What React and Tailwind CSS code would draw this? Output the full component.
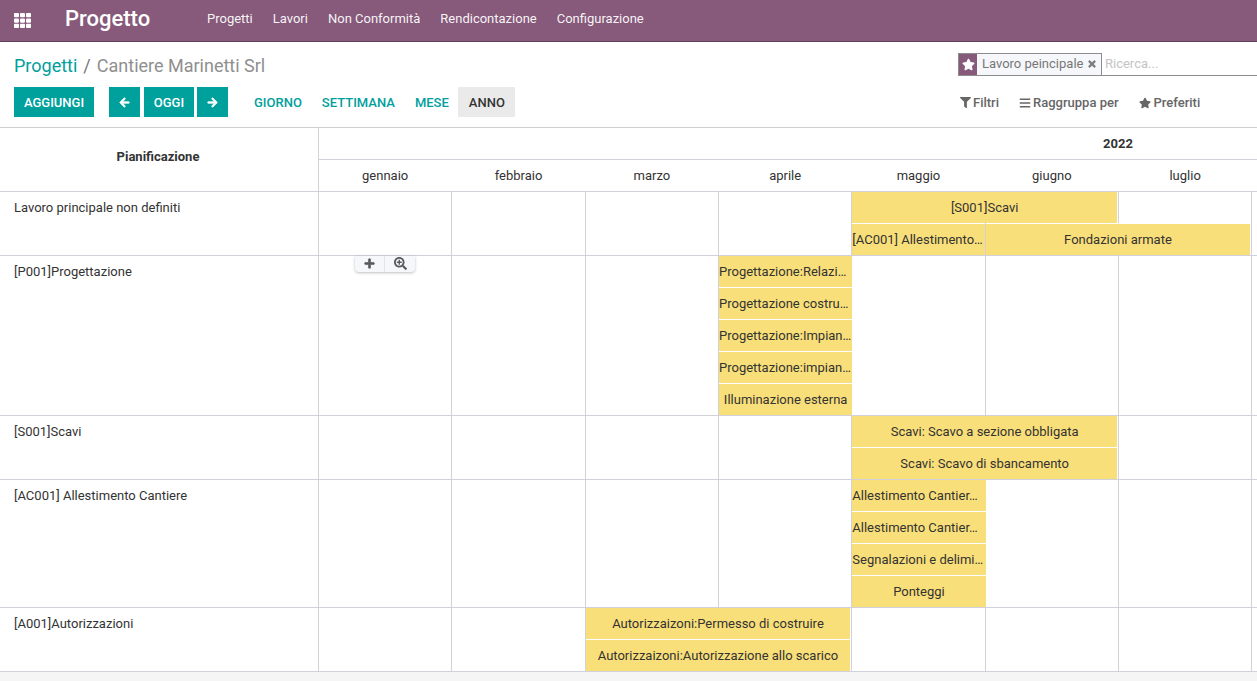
import React from "react";
import { FaTh, FaArrowLeft, FaArrowRight, FaFilter, FaBars, FaStar, FaTimes, FaPlus, FaSearchPlus } from "react-icons/fa";

const MENU = ["Progetti", "Lavori", "Non Conformità", "Rendicontazione", "Configurazione"];
const MONTHS = ["gennaio", "febbraio", "marzo", "aprile", "maggio", "giugno", "luglio"];
const MONTH_COLS = ["col-start-2", "col-start-3", "col-start-4", "col-start-5", "col-start-6", "col-start-7", "col-start-8"];

const ROWS = [
  {
    label: "Lavoro principale non definiti",
    rowsCls: "grid-rows-[31px_32px]",
    bars: [
      { text: "[S001]Scavi", cls: "col-start-6 col-span-2 row-start-1 mr-[2px] text-center" },
      { text: "[AC001] Allestimento…", cls: "col-start-6 col-span-1 row-start-2 border-t border-white mr-[1px] text-left" },
      { text: "Fondazioni armate", cls: "col-start-7 col-span-2 row-start-2 border-t border-white mr-[2px] text-center" },
    ],
  },
  {
    label: "[P001]Progettazione",
    rowsCls: "grid-rows-[31px_32px_32px_32px_32px]",
    bars: [
      { text: "Progettazione:Relazi…", cls: "col-start-5 col-span-1 row-start-1 text-left" },
      { text: "Progettazione costru…", cls: "col-start-5 col-span-1 row-start-2 border-t border-white text-left" },
      { text: "Progettazione:Impian…", cls: "col-start-5 col-span-1 row-start-3 border-t border-white text-left" },
      { text: "Progettazione:impian…", cls: "col-start-5 col-span-1 row-start-4 border-t border-white text-left" },
      { text: "Illuminazione esterna", cls: "col-start-5 col-span-1 row-start-5 border-t border-white text-center" },
    ],
  },
  {
    label: "[S001]Scavi",
    rowsCls: "grid-rows-[31px_32px]",
    bars: [
      { text: "Scavi: Scavo a sezione obbligata", cls: "col-start-6 col-span-2 row-start-1 mr-[2px] text-center" },
      { text: "Scavi: Scavo di sbancamento", cls: "col-start-6 col-span-2 row-start-2 border-t border-white mr-[2px] text-center" },
    ],
  },
  {
    label: "[AC001] Allestimento Cantiere",
    rowsCls: "grid-rows-[31px_32px_32px_32px]",
    bars: [
      { text: "Allestimento Cantier…", cls: "col-start-6 col-span-1 row-start-1 text-left" },
      { text: "Allestimento Cantier…", cls: "col-start-6 col-span-1 row-start-2 border-t border-white text-left" },
      { text: "Segnalazioni e delimi…", cls: "col-start-6 col-span-1 row-start-3 border-t border-white text-left" },
      { text: "Ponteggi", cls: "col-start-6 col-span-1 row-start-4 border-t border-white text-center" },
    ],
  },
  {
    label: "[A001]Autorizzazioni",
    rowsCls: "grid-rows-[31px_32px]",
    bars: [
      { text: "Autorizzaizoni:Permesso di costruire", cls: "col-start-4 col-span-2 row-start-1 mr-[2px] text-center" },
      { text: "Autorizzaizoni:Autorizzazione allo scarico", cls: "col-start-4 col-span-2 row-start-2 border-t border-white mr-[2px] text-center" },
    ],
  },
];

const GRID = "grid grid-cols-[319px_repeat(7,133.33px)_1fr]";
const LINE = "border-[#d1d1da]";

function GanttRow({ row, children }) {
  return (
    <div className={`${GRID} ${row.rowsCls} relative border-b ${LINE} bg-white`}>
      <div className={`col-start-1 row-start-1 row-span-full border-r ${LINE} pl-[14px] pt-[7px] text-[13px] leading-[17px] text-[#333]`}>
        {row.label}
      </div>
      {MONTHS.map((m, i) => (
        <div key={m} className={`${MONTH_COLS[i]} row-start-1 row-span-full border-r ${LINE}`} />
      ))}
      {row.bars.map((b, i) => (
        <div key={i} className={`${b.cls} z-10 min-w-0 overflow-hidden whitespace-nowrap bg-[#f9df79] text-[13px] leading-[31px] text-[#333]`}>
          {b.text}
        </div>
      ))}
      {children}
    </div>
  );
}

export default function App() {
  return (
    <div className="h-[681px] overflow-hidden bg-[#f5f5f5] font-['Roboto',sans-serif] text-[13px] text-[#4c4c4c]">
      {/* top bar */}
      <nav className="h-[42px] bg-[#875a7b] border-b border-[#5f4057] flex items-center text-white">
        <FaTh className="ml-[14px] w-[17px] h-[17px]" />
        <span className="ml-[34px] w-[142px] text-[22px] font-medium leading-none -mt-[3px]">Progetto</span>
        <div className="flex gap-5 -mt-[3px]">
          {MENU.map((m) => (
            <span key={m} className="text-[13px] text-white/95">{m}</span>
          ))}
        </div>
      </nav>

      {/* control panel */}
      <div className="h-[86px] bg-white border-b border-[#cfcfcf] flex justify-between">
        <div className="pl-[14px] flex flex-col">
          <div className="h-[45px] pt-[11px] text-[18px] leading-[25px]">
            <span className="text-[#00a09d]">Progetti</span>
            <span className="text-[#777] mx-[6px]">/</span>
            <span className="text-[#8f8f8f]">Cantiere Marinetti Srl</span>
          </div>
          <div className="flex items-start">
            <button className="h-[30px] w-[80px] bg-[#00a09d] text-white text-[13px] leading-[31px] font-medium">AGGIUNGI</button>
            <button className="ml-[15px] h-[30px] w-[31px] bg-[#00a09d] text-white flex items-center justify-center">
              <FaArrowLeft className="w-[11px] h-[11px]" stroke="currentColor" strokeWidth={30} />
            </button>
            <button className="ml-[4px] h-[30px] w-[50px] bg-[#00a09d] text-white text-[13px] leading-[31px] font-medium">OGGI</button>
            <button className="ml-[3px] h-[30px] w-[31px] bg-[#00a09d] text-white flex items-center justify-center">
              <FaArrowRight className="w-[11px] h-[11px]" stroke="currentColor" strokeWidth={30} />
            </button>
            <div className="ml-[16px] flex text-[13px] font-medium text-[#00a09d]">
              <span className="h-[30px] leading-[31px] px-[10px]">GIORNO</span>
              <span className="h-[30px] leading-[31px] px-[10px]">SETTIMANA</span>
              <span className="h-[30px] leading-[31px] px-[10px]">MESE</span>
              <span className="h-[30px] leading-[31px] pl-[11px] pr-[10px] -ml-[1px] bg-[#eaeaea] text-[#333]">ANNO</span>
            </div>
          </div>
        </div>
        <div className="w-[299px] flex flex-col">
          <div className="mt-[11px] h-[23px] border-b border-[#8c8c8c] flex items-start">
            <div className="h-[23px] w-[144px] shrink-0 flex border border-[#8c8c8c] bg-[#f6f7fa]">
              <span className="w-[18px] bg-[#875a7b] flex items-center justify-center"><FaStar className="w-[13px] h-[13px] text-white" /></span>
              <span className="ml-[5px] leading-[20px] text-[#777]">Lavoro peincipale</span>
              <FaTimes className="ml-[4px] mt-[5px] w-[10px] h-[10px] text-[#777]" stroke="currentColor" strokeWidth={30} />
            </div>
            <span className="ml-[3px] leading-[21px] text-[#c4c4c4]">Ricerca...</span>
          </div>
          <div className="mt-[17px] flex items-center text-[#666] font-medium text-[13px]">
            <FaFilter className="ml-[2px] w-[11px] h-[11px]" /><span className="ml-[2px]">Filtri</span>
            <FaBars className="ml-[20px] w-[12px] h-[12px]" /><span className="ml-[2px]">Raggruppa per</span>
            <FaStar className="ml-[20px] w-[12px] h-[12px]" /><span className="ml-[3px]">Preferiti</span>
          </div>
        </div>
      </div>

      {/* gantt header */}
      <div className={`${GRID} grid-rows-[32px_31px] bg-white border-b ${LINE} text-[#333]`}>
        <div className={`row-span-2 border-r ${LINE} flex items-center justify-center pb-[6px] pr-[2px] text-[13px] font-bold`}>Pianificazione</div>
        <div className={`col-start-2 col-span-8 border-b ${LINE} overflow-hidden`}>
          <div className="w-[1598px] text-center text-[13px] font-bold leading-[31px]">2022</div>
        </div>
        {MONTHS.map((m) => (
          <div key={m} className="text-center text-[13px] leading-[31px] pr-[1px]">{m}</div>
        ))}
      </div>

      {/* gantt rows */}
      {ROWS.map((r, i) => (
        <GanttRow key={r.label} row={r}>
          {i === 1 && (
            <div className="absolute left-[355px] top-0 z-20 h-[16px] w-[60px] flex bg-[#f6f7fa] rounded-b shadow-[0_1px_3px_rgba(0,0,0,0.25)] text-[#5a5a5a]">
              <span className="w-[30px] pb-[1px] flex items-center justify-center border-r border-[#e4e4e4]">
                <FaPlus className="w-[11px] h-[11px]" stroke="currentColor" strokeWidth={30} />
              </span>
              <span className="flex-1 pb-[1px] flex items-center justify-center"><FaSearchPlus className="w-[13px] h-[13px]" /></span>
            </div>
          )}
        </GanttRow>
      ))}
    </div>
  );
}
